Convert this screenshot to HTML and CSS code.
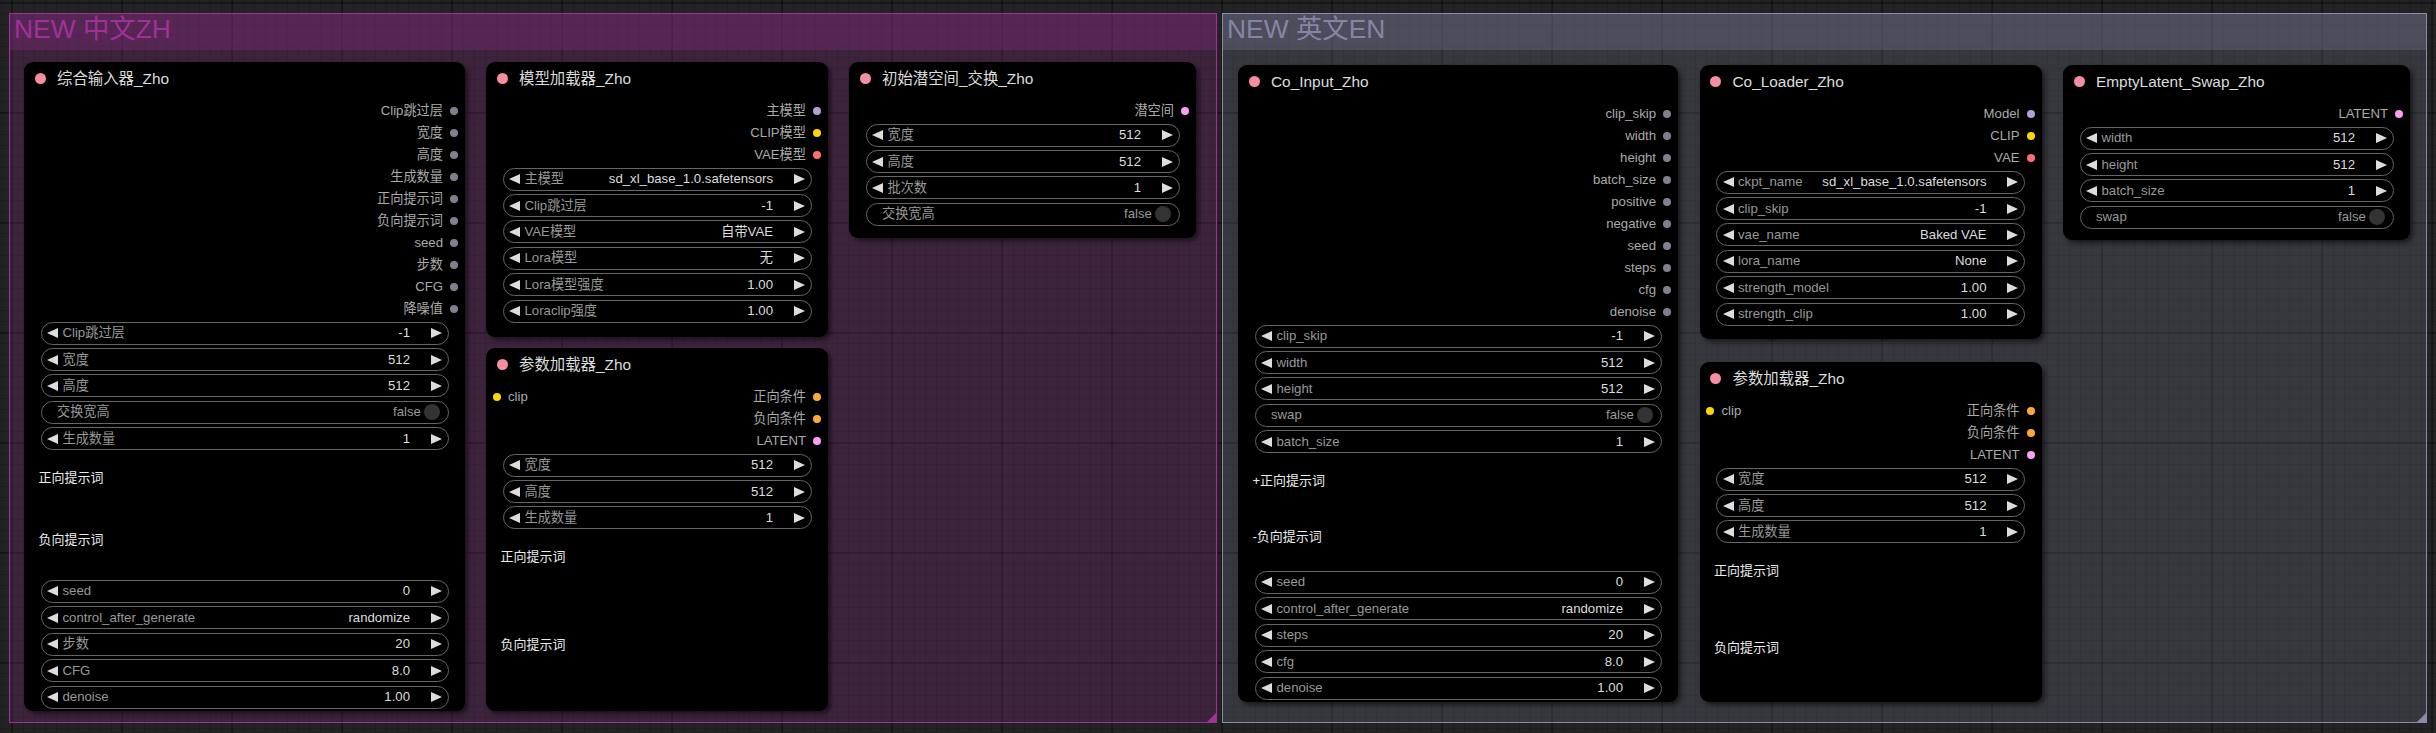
FILE: index.html
```html
<!DOCTYPE html>
<html lang="zh">
<head>
<meta charset="utf-8">
<title>ComfyUI Zho nodes</title>
<link rel="stylesheet" href="styles.css">
</head>
<body>
<div class="canvas">

  <!-- GROUP 1 -->
  <section class="group group-zh">
    <div class="group-title">NEW 中文ZH</div>
    <div class="group-body">

      <div class="node node-input-zh">
        <div class="title"><i class="tdot"></i><span>综合输入器_Zho</span></div>
        <div class="slots">
          <div class="row"><span class="out">Clip跳过层<i class="dot c-gen"></i></span></div>
          <div class="row"><span class="out">宽度<i class="dot c-gen"></i></span></div>
          <div class="row"><span class="out">高度<i class="dot c-gen"></i></span></div>
          <div class="row"><span class="out">生成数量<i class="dot c-gen"></i></span></div>
          <div class="row"><span class="out">正向提示词<i class="dot c-gen"></i></span></div>
          <div class="row"><span class="out">负向提示词<i class="dot c-gen"></i></span></div>
          <div class="row"><span class="out">seed<i class="dot c-gen"></i></span></div>
          <div class="row"><span class="out">步数<i class="dot c-gen"></i></span></div>
          <div class="row"><span class="out">CFG<i class="dot c-gen"></i></span></div>
          <div class="row"><span class="out">降噪值<i class="dot c-gen"></i></span></div>
        </div>
        <div class="widgets">
          <div class="w"><i class="al"></i><span class="lb">Clip跳过层</span><span class="v">-1</span><i class="ar"></i></div>
          <div class="w"><i class="al"></i><span class="lb">宽度</span><span class="v">512</span><i class="ar"></i></div>
          <div class="w"><i class="al"></i><span class="lb">高度</span><span class="v">512</span><i class="ar"></i></div>
          <div class="w tg"><span class="lb">交换宽高</span><span class="tv">false</span><i class="knob"></i></div>
          <div class="w"><i class="al"></i><span class="lb">生成数量</span><span class="v">1</span><i class="ar"></i></div>
        </div>
        <div class="prompt ph-62">正向提示词</div>
        <div class="prompt ph-66">负向提示词</div>
        <div class="widgets">
          <div class="w"><i class="al"></i><span class="lb">seed</span><span class="v">0</span><i class="ar"></i></div>
          <div class="w"><i class="al"></i><span class="lb">control_after_generate</span><span class="v">randomize</span><i class="ar"></i></div>
          <div class="w"><i class="al"></i><span class="lb">步数</span><span class="v">20</span><i class="ar"></i></div>
          <div class="w"><i class="al"></i><span class="lb">CFG</span><span class="v">8.0</span><i class="ar"></i></div>
          <div class="w"><i class="al"></i><span class="lb">denoise</span><span class="v">1.00</span><i class="ar"></i></div>
        </div>
      </div>

      <div class="col">
        <div class="node node-loader-zh">
          <div class="title"><i class="tdot"></i><span>模型加载器_Zho</span></div>
          <div class="slots">
            <div class="row"><span class="out">主模型<i class="dot c-model"></i></span></div>
            <div class="row"><span class="out">CLIP模型<i class="dot c-clip"></i></span></div>
            <div class="row"><span class="out">VAE模型<i class="dot c-vae"></i></span></div>
          </div>
          <div class="widgets">
            <div class="w"><i class="al"></i><span class="lb">主模型</span><span class="v">sd_xl_base_1.0.safetensors</span><i class="ar"></i></div>
            <div class="w"><i class="al"></i><span class="lb">Clip跳过层</span><span class="v">-1</span><i class="ar"></i></div>
            <div class="w"><i class="al"></i><span class="lb">VAE模型</span><span class="v">自带VAE</span><i class="ar"></i></div>
            <div class="w"><i class="al"></i><span class="lb">Lora模型</span><span class="v">无</span><i class="ar"></i></div>
            <div class="w"><i class="al"></i><span class="lb">Lora模型强度</span><span class="v">1.00</span><i class="ar"></i></div>
            <div class="w"><i class="al"></i><span class="lb">Loraclip强度</span><span class="v">1.00</span><i class="ar"></i></div>
          </div>
        </div>

        <div class="node node-param-zh">
          <div class="title"><i class="tdot"></i><span>参数加载器_Zho</span></div>
          <div class="slots">
            <div class="row"><span class="in"><i class="dot c-clip"></i>clip</span><span class="out">正向条件<i class="dot c-cond"></i></span></div>
            <div class="row"><span class="out">负向条件<i class="dot c-cond"></i></span></div>
            <div class="row"><span class="out">LATENT<i class="dot c-latent"></i></span></div>
          </div>
          <div class="widgets">
            <div class="w"><i class="al"></i><span class="lb">宽度</span><span class="v">512</span><i class="ar"></i></div>
            <div class="w"><i class="al"></i><span class="lb">高度</span><span class="v">512</span><i class="ar"></i></div>
            <div class="w"><i class="al"></i><span class="lb">生成数量</span><span class="v">1</span><i class="ar"></i></div>
          </div>
          <div class="prompt ph-88">正向提示词</div>
          <div class="prompt ph-fill">负向提示词</div>
        </div>
      </div>

      <div class="node node-latent-zh">
        <div class="title"><i class="tdot"></i><span>初始潜空间_交换_Zho</span></div>
        <div class="slots">
          <div class="row"><span class="out">潜空间<i class="dot c-latent"></i></span></div>
        </div>
        <div class="widgets">
          <div class="w"><i class="al"></i><span class="lb">宽度</span><span class="v">512</span><i class="ar"></i></div>
          <div class="w"><i class="al"></i><span class="lb">高度</span><span class="v">512</span><i class="ar"></i></div>
          <div class="w"><i class="al"></i><span class="lb">批次数</span><span class="v">1</span><i class="ar"></i></div>
          <div class="w tg"><span class="lb">交换宽高</span><span class="tv">false</span><i class="knob"></i></div>
        </div>
      </div>

    </div>
    <i class="grip"></i>
  </section>

  <!-- GROUP 2 -->
  <section class="group group-en">
    <div class="group-title">NEW 英文EN</div>
    <div class="group-body">

      <div class="node node-input-en">
        <div class="title"><i class="tdot"></i><span>Co_Input_Zho</span></div>
        <div class="slots">
          <div class="row"><span class="out">clip_skip<i class="dot c-gen"></i></span></div>
          <div class="row"><span class="out">width<i class="dot c-gen"></i></span></div>
          <div class="row"><span class="out">height<i class="dot c-gen"></i></span></div>
          <div class="row"><span class="out">batch_size<i class="dot c-gen"></i></span></div>
          <div class="row"><span class="out">positive<i class="dot c-gen"></i></span></div>
          <div class="row"><span class="out">negative<i class="dot c-gen"></i></span></div>
          <div class="row"><span class="out">seed<i class="dot c-gen"></i></span></div>
          <div class="row"><span class="out">steps<i class="dot c-gen"></i></span></div>
          <div class="row"><span class="out">cfg<i class="dot c-gen"></i></span></div>
          <div class="row"><span class="out">denoise<i class="dot c-gen"></i></span></div>
        </div>
        <div class="widgets">
          <div class="w"><i class="al"></i><span class="lb">clip_skip</span><span class="v">-1</span><i class="ar"></i></div>
          <div class="w"><i class="al"></i><span class="lb">width</span><span class="v">512</span><i class="ar"></i></div>
          <div class="w"><i class="al"></i><span class="lb">height</span><span class="v">512</span><i class="ar"></i></div>
          <div class="w tg"><span class="lb">swap</span><span class="tv">false</span><i class="knob"></i></div>
          <div class="w"><i class="al"></i><span class="lb">batch_size</span><span class="v">1</span><i class="ar"></i></div>
        </div>
        <div class="prompt ph-56">+正向提示词</div>
        <div class="prompt ph-60">-负向提示词</div>
        <div class="widgets">
          <div class="w"><i class="al"></i><span class="lb">seed</span><span class="v">0</span><i class="ar"></i></div>
          <div class="w"><i class="al"></i><span class="lb">control_after_generate</span><span class="v">randomize</span><i class="ar"></i></div>
          <div class="w"><i class="al"></i><span class="lb">steps</span><span class="v">20</span><i class="ar"></i></div>
          <div class="w"><i class="al"></i><span class="lb">cfg</span><span class="v">8.0</span><i class="ar"></i></div>
          <div class="w"><i class="al"></i><span class="lb">denoise</span><span class="v">1.00</span><i class="ar"></i></div>
        </div>
      </div>

      <div class="col">
        <div class="node node-loader-en">
          <div class="title"><i class="tdot"></i><span>Co_Loader_Zho</span></div>
          <div class="slots">
            <div class="row"><span class="out">Model<i class="dot c-model"></i></span></div>
            <div class="row"><span class="out">CLIP<i class="dot c-clip"></i></span></div>
            <div class="row"><span class="out">VAE<i class="dot c-vae"></i></span></div>
          </div>
          <div class="widgets">
            <div class="w"><i class="al"></i><span class="lb">ckpt_name</span><span class="v">sd_xl_base_1.0.safetensors</span><i class="ar"></i></div>
            <div class="w"><i class="al"></i><span class="lb">clip_skip</span><span class="v">-1</span><i class="ar"></i></div>
            <div class="w"><i class="al"></i><span class="lb">vae_name</span><span class="v">Baked VAE</span><i class="ar"></i></div>
            <div class="w"><i class="al"></i><span class="lb">lora_name</span><span class="v">None</span><i class="ar"></i></div>
            <div class="w"><i class="al"></i><span class="lb">strength_model</span><span class="v">1.00</span><i class="ar"></i></div>
            <div class="w"><i class="al"></i><span class="lb">strength_clip</span><span class="v">1.00</span><i class="ar"></i></div>
          </div>
        </div>

        <div class="node node-param-en">
          <div class="title"><i class="tdot"></i><span>参数加载器_Zho</span></div>
          <div class="slots">
            <div class="row"><span class="in"><i class="dot c-clip"></i>clip</span><span class="out">正向条件<i class="dot c-cond"></i></span></div>
            <div class="row"><span class="out">负向条件<i class="dot c-cond"></i></span></div>
            <div class="row"><span class="out">LATENT<i class="dot c-latent"></i></span></div>
          </div>
          <div class="widgets">
            <div class="w"><i class="al"></i><span class="lb">宽度</span><span class="v">512</span><i class="ar"></i></div>
            <div class="w"><i class="al"></i><span class="lb">高度</span><span class="v">512</span><i class="ar"></i></div>
            <div class="w"><i class="al"></i><span class="lb">生成数量</span><span class="v">1</span><i class="ar"></i></div>
          </div>
          <div class="prompt ph-77">正向提示词</div>
          <div class="prompt ph-fill">负向提示词</div>
        </div>
      </div>

      <div class="node node-latent-en">
        <div class="title"><i class="tdot"></i><span>EmptyLatent_Swap_Zho</span></div>
        <div class="slots">
          <div class="row"><span class="out">LATENT<i class="dot c-latent"></i></span></div>
        </div>
        <div class="widgets">
          <div class="w"><i class="al"></i><span class="lb">width</span><span class="v">512</span><i class="ar"></i></div>
          <div class="w"><i class="al"></i><span class="lb">height</span><span class="v">512</span><i class="ar"></i></div>
          <div class="w"><i class="al"></i><span class="lb">batch_size</span><span class="v">1</span><i class="ar"></i></div>
          <div class="w tg"><span class="lb">swap</span><span class="tv">false</span><i class="knob"></i></div>
        </div>
      </div>

    </div>
    <i class="grip"></i>
  </section>

</div>
</body>
</html>
```

FILE: styles.css
```css
html, body {
  margin: 0;
  padding: 0;
}

body {
  width: 2436px;
  height: 733px;
  overflow: hidden;
  font-family: "Liberation Sans", "Noto Sans CJK SC", sans-serif;
  background-color: #232323;
  background-image:
    linear-gradient(to right, rgba(0, 0, 0, 0.28) 2px, transparent 2px),
    linear-gradient(to bottom, rgba(0, 0, 0, 0.28) 2px, transparent 2px),
    linear-gradient(to right, rgba(0, 0, 0, 0.13) 1px, transparent 1px),
    linear-gradient(to bottom, rgba(0, 0, 0, 0.13) 1px, transparent 1px);
  background-size: 110px 110px, 110px 110px, 11px 11px, 11px 11px;
  background-position: 11px 0, 0 2px, 1px 0, 0 2px;
}

.canvas {
  display: flex;
  align-items: flex-start;
  padding: 13px 0 0 9px;
}

/* ---------- groups ---------- */
.group {
  position: relative;
  box-sizing: border-box;
  height: 710px;
  border: 1px solid;
}

.group-zh {
  width: 1208px;
  border-color: #a1309b;
  background: rgba(150, 45, 150, 0.22);
}

.group-en {
  width: 1205px;
  margin-left: 5px;
  border-color: #8a8aab;
  background: rgba(136, 136, 170, 0.2);
}

.group-title {
  height: 36px;
  line-height: 31px;
  padding-left: 4px;
  font-size: 26.4px;
  white-space: nowrap;
}

.group-zh .group-title {
  color: #a1309b;
  background: rgba(161, 48, 155, 0.26);
}

.group-en .group-title {
  color: #8585a8;
  background: rgba(136, 136, 170, 0.28);
}

.group-body {
  display: flex;
  align-items: flex-start;
  gap: 21px;
}

.group-zh .group-body {
  padding: 12px 0 0 14px;
}

.group-en .group-body {
  padding: 15px 0 0 15px;
  gap: 21.5px;
}

.grip {
  position: absolute;
  right: 0;
  bottom: 0;
  width: 0;
  height: 0;
  border-left: 9px solid transparent;
  border-bottom: 9px solid #a1309b;
}

.group-en .grip {
  border-bottom-color: #8a8aab;
}

.col {
  display: flex;
  flex-direction: column;
}

/* ---------- nodes ---------- */
.node {
  box-sizing: border-box;
  display: flex;
  flex-direction: column;
  background: #000;
  border-radius: 9px;
  box-shadow: 3px 3px 5px rgba(0, 0, 0, 0.55);
  color: #aaa;
  overflow: hidden;
}

.node-input-zh { width: 441px; height: 649px; }
.node-loader-zh { width: 342px; height: 275px; }
.node-param-zh { width: 342px; height: 363px; margin-top: 11px; }
.node-latent-zh { width: 347px; height: 176px; }

.node-input-en { width: 440px; height: 637px; }
.node-loader-en { width: 342px; height: 274px; }
.node-param-en { width: 342px; height: 340px; margin-top: 23px; }
.node-latent-en { width: 347px; height: 175px; }

.title {
  flex: none;
  height: 33px;
  display: flex;
  align-items: center;
  gap: 11.5px;
  padding-left: 10.5px;
  font-size: 15.4px;
  line-height: 18px;
  color: #dcdcdc;
  white-space: nowrap;
}

.tdot {
  flex: none;
  width: 11px;
  height: 11px;
  border-radius: 50%;
  background: #f58e9f;
}

.slots {
  flex: none;
  padding-top: 5px;
}

.row {
  height: 22px;
  display: flex;
  align-items: center;
  font-size: 13.2px;
  line-height: 16px;
  color: #aaa;
  white-space: nowrap;
}

.out {
  margin-left: auto;
  display: flex;
  align-items: center;
  padding-right: 7px;
}

.out .dot {
  margin-left: 7px;
}

.in {
  display: flex;
  align-items: center;
  padding-left: 6.7px;
}

.in .dot {
  margin-right: 7.3px;
}

.dot {
  flex: none;
  width: 8px;
  height: 8px;
  border-radius: 50%;
}

.c-gen { background: #7f7f90; }
.c-model { background: #b39ddb; }
.c-clip { background: #ffd500; }
.c-vae { background: #ff6e6e; }
.c-cond { background: #ffa931; }
.c-latent { background: #ff9cf9; }

/* ---------- widgets ---------- */
.widgets {
  flex: none;
  display: flex;
  flex-direction: column;
  gap: 3.4px;
  padding: 1.7px 16.5px 0;
}

.w {
  box-sizing: border-box;
  height: 23px;
  display: flex;
  align-items: center;
  padding: 0 5.6px;
  border: 1px solid #666;
  border-radius: 12px;
  background: #000;
  font-size: 13.2px;
  line-height: 16px;
  white-space: nowrap;
}

.al,
.ar {
  flex: none;
  width: 0;
  height: 0;
  border-top: 5.5px solid transparent;
  border-bottom: 5.5px solid transparent;
}

.al {
  border-right: 11px solid #ddd;
}

.ar {
  border-left: 11px solid #ddd;
  margin-left: 20.9px;
}

.lb {
  flex: 1;
  min-width: 0;
  overflow: hidden;
  margin-left: 4.4px;
  color: #999;
}

.v {
  color: #ddd;
}

.w.tg {
  padding: 0 7.6px 0 15.5px;
}

.tg .lb {
  margin-left: 0;
}

.tv {
  color: #999;
  margin-right: 3px;
}

.knob {
  flex: none;
  width: 16px;
  height: 16px;
  border-radius: 50%;
  background: #333;
}

/* ---------- prompt text areas ---------- */
.prompt {
  flex: none;
  box-sizing: border-box;
  padding: 20px 0 0 14.5px;
  font-size: 13px;
  line-height: 16px;
  color: #ececec;
  white-space: nowrap;
}

.ph-56 { height: 56px; }
.ph-60 { height: 60px; }
.ph-62 { height: 62px; }
.ph-66 { height: 66px; }
.ph-77 { height: 77px; }
.ph-88 { height: 88px; }
.ph-fill { flex: 1; }
```
